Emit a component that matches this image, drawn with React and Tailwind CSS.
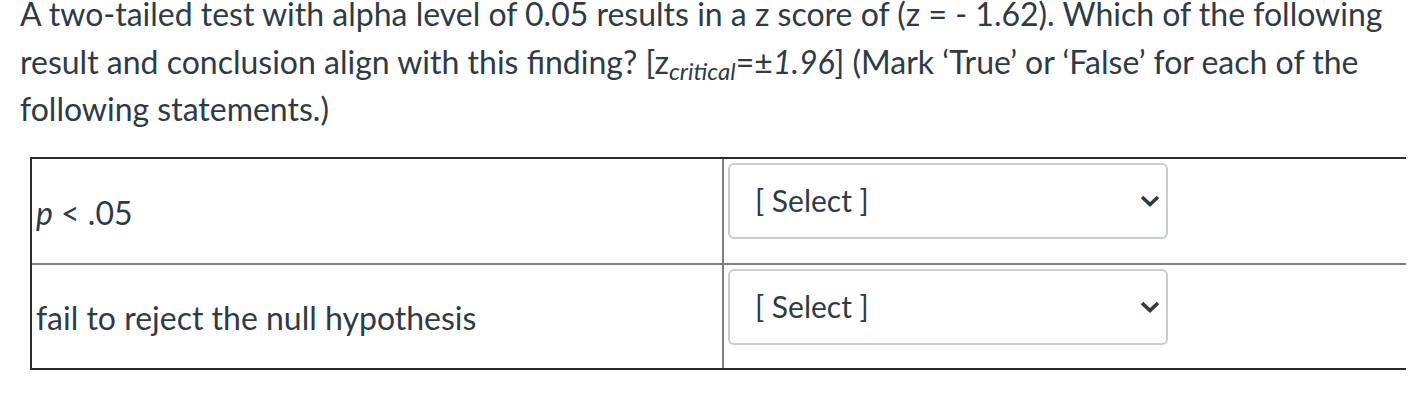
import React from 'react';

function Chevron() {
  return (
    <svg width="20" height="12" viewBox="0 0 20 12" className="shrink-0">
      <path d="M2 2 L10 9.5 L18 2" fill="none" stroke="#2d3b45" strokeWidth="3.6" />
    </svg>
  );
}

function SelectBox() {
  return (
    <div className="w-[440px] h-[76px] border-2 border-[#c7cdd1] rounded-[6px] bg-white flex items-center justify-between pl-[25px] pr-[6px]">
      <span className="text-[30px] text-[#2d3b45]">[ Select ]</span>
      <Chevron />
    </div>
  );
}

function Row({ children, last }) {
  return (
    <div className={`grid grid-cols-[692px_1fr] ${last ? 'h-[103px]' : 'h-[106px] border-b-2 border-[#808080]'}`}>
      <div className="flex items-center pl-[4px] pt-[4px] border-r-2 border-[#808080] text-[32px] text-[#2d3b45]">
        {children}
      </div>
      <div className="pl-[4px] pt-[4px]">
        <SelectBox />
      </div>
    </div>
  );
}

export default function App() {
  return (
    <div className="w-[1426px] h-[412px] bg-white overflow-hidden" style={{ fontFamily: 'Lato, "Noto Sans", sans-serif' }}>
      <p className="pl-[20px] -mt-[10px] text-[32px] leading-[47.5px] text-[#2d3b45] whitespace-nowrap">
        A two-tailed test with alpha level of 0.05 results in a z score of (z = - 1.62). Which of the following
        <br />
        result and conclusion align with this finding? [z<sub className="italic text-[24px] align-baseline leading-none">critical</sub>=±<span className="italic">1.96</span>] (Mark ‘True’ or ‘False’ for each of the
        <br />
        following statements.)
      </p>
      <div className="ml-[30px] mt-[24px] w-[1376px] border-t-2 border-b-2 border-l-2 border-[#2b2b2b]">
        <Row>
          <span><span className="italic">p</span> &lt; .05</span>
        </Row>
        <Row last>
          <span>fail to reject the null hypothesis</span>
        </Row>
      </div>
    </div>
  );
}
